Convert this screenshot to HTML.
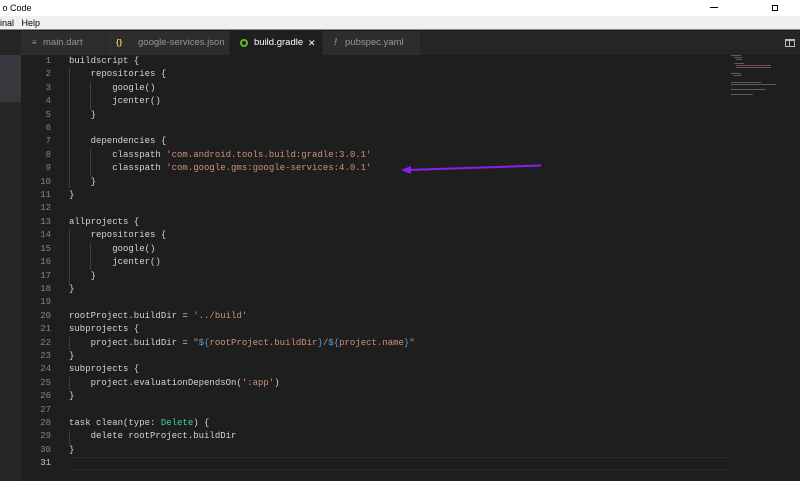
<!DOCTYPE html>
<html><head><meta charset="utf-8"><style>
*{margin:0;padding:0;box-sizing:border-box}
body{width:800px;height:481px;overflow:hidden;background:#1e1e1e;font-family:"Liberation Sans",sans-serif;position:relative}
.title{position:absolute;left:0;top:0;width:800px;height:16px;background:#fff;font-size:9px;color:#000;line-height:16px}
.menu{position:absolute;left:0;top:16px;width:800px;height:14px;background:#f0f0f0;font-size:9px;line-height:14px;color:#000;border-bottom:1px solid #888}
.tabs{position:absolute;left:0;top:31px;width:800px;height:24px;background:#252526}
.tab{position:absolute;top:0;height:24px;font-size:9.5px;line-height:24px;color:#969696;background:#2d2d2d}
.act{position:absolute;left:0;top:55px;width:21px;height:47px;background:#37373d}
.strip{position:absolute;left:0;top:31px;width:21px;height:450px;background:#252526}
.code{position:absolute;left:21px;top:55px;font-family:"Liberation Mono",monospace;font-size:9px;line-height:13.4px;color:#d4d4d4;white-space:pre}
.ln{position:absolute;left:21px;top:55px;width:30px;text-align:right;font-family:"Liberation Mono",monospace;font-size:9px;line-height:13.4px;color:#858585;white-space:pre}
.c{position:absolute;left:69px;top:55px;font-family:"Liberation Mono",monospace;font-size:9px;line-height:13.4px;color:#d4d4d4;white-space:pre}
.s{color:#ce9178}.t{color:#4ec9b0}.b{color:#569cd6}
.guide{position:absolute;width:1px;background:#404040}
</style></head><body>
<div class="title">&nbsp;o Code<span style="position:absolute;left:710px;top:7px;width:8px;height:1px;background:#000"></span><span style="position:absolute;left:772px;top:5px;width:6px;height:6px;border:1px solid #000"></span></div>
<div class="menu">inal&nbsp;&nbsp;&nbsp;Help</div>
<div class="strip"></div>
<div class="act"></div>
<div class="tabs">
<div class="tab" style="left:21px;width:84px;padding-left:22px"><span style="position:absolute;left:11px;font-size:8px">≡</span>main.dart</div>
<div class="tab" style="left:106px;width:123px;padding-left:32px"><span style="position:absolute;left:10px;color:#e8c547;font-weight:bold;font-size:8px">{}</span>google-services.json</div>
<div class="tab" style="left:230px;width:92px;padding-left:24px;background:#1e1e1e;color:#fff"><span style="position:absolute;left:10px;top:8px;width:8px;height:8px;border:2px solid #5cb82c;border-radius:50%"></span>build.gradle<span style="position:absolute;left:78px;font-size:9px">✕</span></div>
<div class="tab" style="left:323px;width:97px;padding-left:22px"><span style="position:absolute;left:11px;color:#a074c4;font-style:italic;font-weight:bold">!</span>pubspec.yaml</div>
<div style="position:absolute;left:785px;top:8px;width:10px;height:8px;border:1px solid #bbb;border-top-width:2px"><div style="position:absolute;left:3px;top:0;width:1px;height:6px;background:#bbb"></div></div>
</div>
<div class="guide" style="left:69px;top:68px;height:120px"></div>
<div class="guide" style="left:90px;top:82px;height:27px"></div>
<div class="guide" style="left:90px;top:149px;height:27px"></div>
<div class="guide" style="left:69px;top:230px;height:54px"></div>
<div class="guide" style="left:90px;top:243px;height:27px"></div>
<div class="guide" style="left:69px;top:337px;height:13px"></div>
<div class="guide" style="left:69px;top:377px;height:13px"></div>
<div class="guide" style="left:69px;top:431px;height:13px"></div>
<div style="position:absolute;left:69px;top:457px;width:662px;height:13px;border-top:1px solid #2a2a2a;border-bottom:1px solid #2a2a2a"></div>
<div class="ln">1
2
3
4
5
6
7
8
9
10
11
12
13
14
15
16
17
18
19
20
21
22
23
24
25
26
27
28
29
30
<span style="color:#c6c6c6">31</span></div>
<div class="c">buildscript {
    repositories {
        google()
        jcenter()
    }

    dependencies {
        classpath <span class="s">'com.android.tools.build:gradle:3.0.1'</span>
        classpath <span class="s">'com.google.gms:google-services:4.0.1'</span>
    }
}

allprojects {
    repositories {
        google()
        jcenter()
    }
}

rootProject.buildDir = <span class="s">'../build'</span>
subprojects {
    project.buildDir = <span class="s">"<span class="b">${</span>rootProject.buildDir<span class="b">}</span>/<span class="b">${</span>project.name<span class="b">}</span>"</span>
}
subprojects {
    project.evaluationDependsOn(<span class="s">':app'</span>)
}

task clean(type: <span class="t">Delete</span>) {
    delete rootProject.buildDir
}
</div>
<svg style="position:absolute;left:0;top:0" width="800" height="481">
<line x1="541" y1="165.5" x2="408" y2="170" stroke="#8a1ef0" stroke-width="2"/>
<polygon points="401,170 411,166 411,174" fill="#8a1ef0"/>
<g fill="#777" opacity="0.7">
<rect x="731" y="55" width="10" height="1"/><rect x="734" y="57" width="8" height="1"/><rect x="736" y="59" width="6" height="1"/><rect x="734" y="63" width="10" height="1"/><rect x="736" y="65" width="35" height="1" fill="#a06050"/><rect x="736" y="67" width="35" height="1"/>
<rect x="731" y="73" width="10" height="1"/><rect x="734" y="75" width="8" height="1"/><rect x="731" y="82" width="30" height="1"/><rect x="731" y="84" width="45" height="1"/><rect x="731" y="89" width="35" height="1"/><rect x="731" y="94" width="22" height="1"/>
</g>
</svg>
</body></html>
